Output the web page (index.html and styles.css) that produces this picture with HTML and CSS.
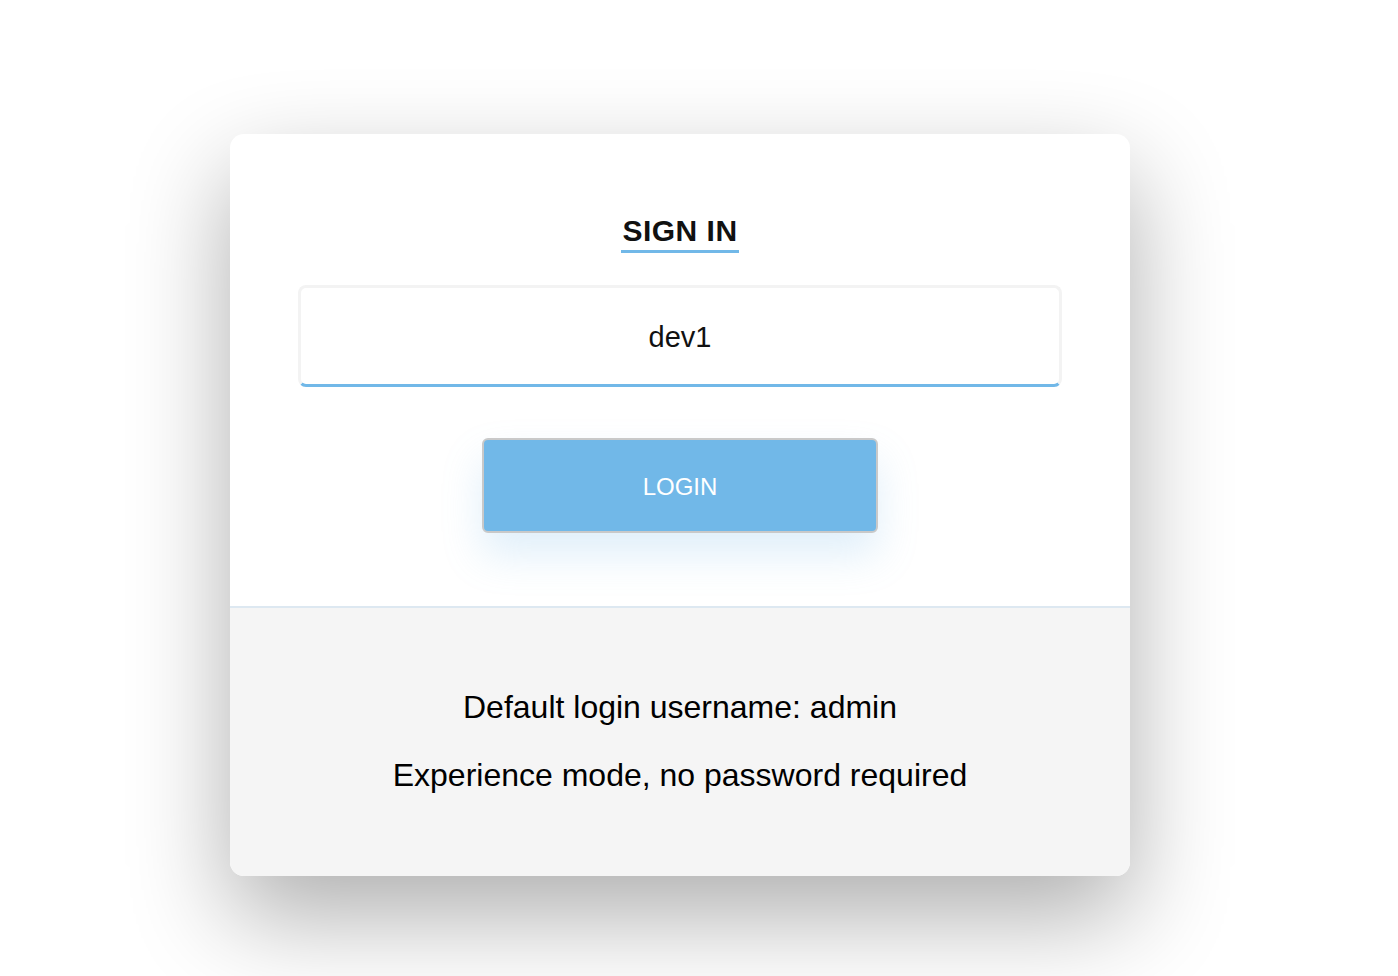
FILE: index.html
```html
<!DOCTYPE html>
<html lang="en">
<head>
<meta charset="utf-8">
<title>Sign in</title>
<link rel="stylesheet" href="styles.css">
</head>
<body>
<div class="card">
  <div class="card-main">
    <h1 class="title">SIGN IN</h1>
    <input class="field" type="text" value="dev1">
    <button class="login-btn" type="button">LOGIN</button>
  </div>
  <div class="card-footer">
    <p class="note">Default login username: admin</p>
    <p class="note">Experience mode, no password required</p>
  </div>
</div>
</body>
</html>
```

FILE: styles.css
```css
html, body {
  margin: 0;
  padding: 0;
  background: #ffffff;
  font-family: "Liberation Sans", Arial, Helvetica, sans-serif;
}

body {
  width: 1398px;
  height: 976px;
  overflow: hidden;
}

.card {
  width: 900px;
  margin: 134px 0 0 230px;
  background: #ffffff;
  border-radius: 14px;
  box-shadow: 0 40px 100px rgba(0, 0, 0, 0.32);
  overflow: hidden;
  display: flex;
  flex-direction: column;
}

.card-main {
  display: flex;
  flex-direction: column;
  align-items: center;
  padding: 81px 68px 73px;
  border-bottom: 2px solid #dde8f1;
}

.title {
  margin: 0;
  font-size: 30px;
  line-height: 32px;
  font-weight: bold;
  letter-spacing: 0.5px;
  padding: 0 1px 3px 1px;
  color: #111111;
  border-bottom: 3px solid #71b8e8;
}

.field {
  box-sizing: border-box;
  width: 764px;
  height: 102px;
  margin-top: 32px;
  border: 3px solid #f3f3f3;
  border-bottom-color: #71b8e8;
  border-radius: 8px;
  background: #ffffff;
  font-family: "Liberation Sans", Arial, Helvetica, sans-serif;
  font-size: 29px;
  color: #111111;
  text-align: center;
  outline: none;
  padding: 3px 20px 0;
}

.login-btn {
  box-sizing: border-box;
  width: 396px;
  height: 95px;
  margin-top: 51px;
  padding-top: 3px;
  background: #71b8e8;
  border: 2px solid #c9c9c9;
  border-radius: 6px;
  color: #ffffff;
  font-family: "Liberation Sans", Arial, Helvetica, sans-serif;
  font-size: 24px;
  box-shadow: 0 22px 40px rgba(113, 184, 232, 0.22);
}

.card-footer {
  background: #f5f5f5;
  padding: 81px 20px 83px;
  display: flex;
  flex-direction: column;
  align-items: center;
  gap: 32px;
}

.note {
  margin: 0;
  font-size: 32px;
  line-height: 36px;
  color: #000000;
}
```
